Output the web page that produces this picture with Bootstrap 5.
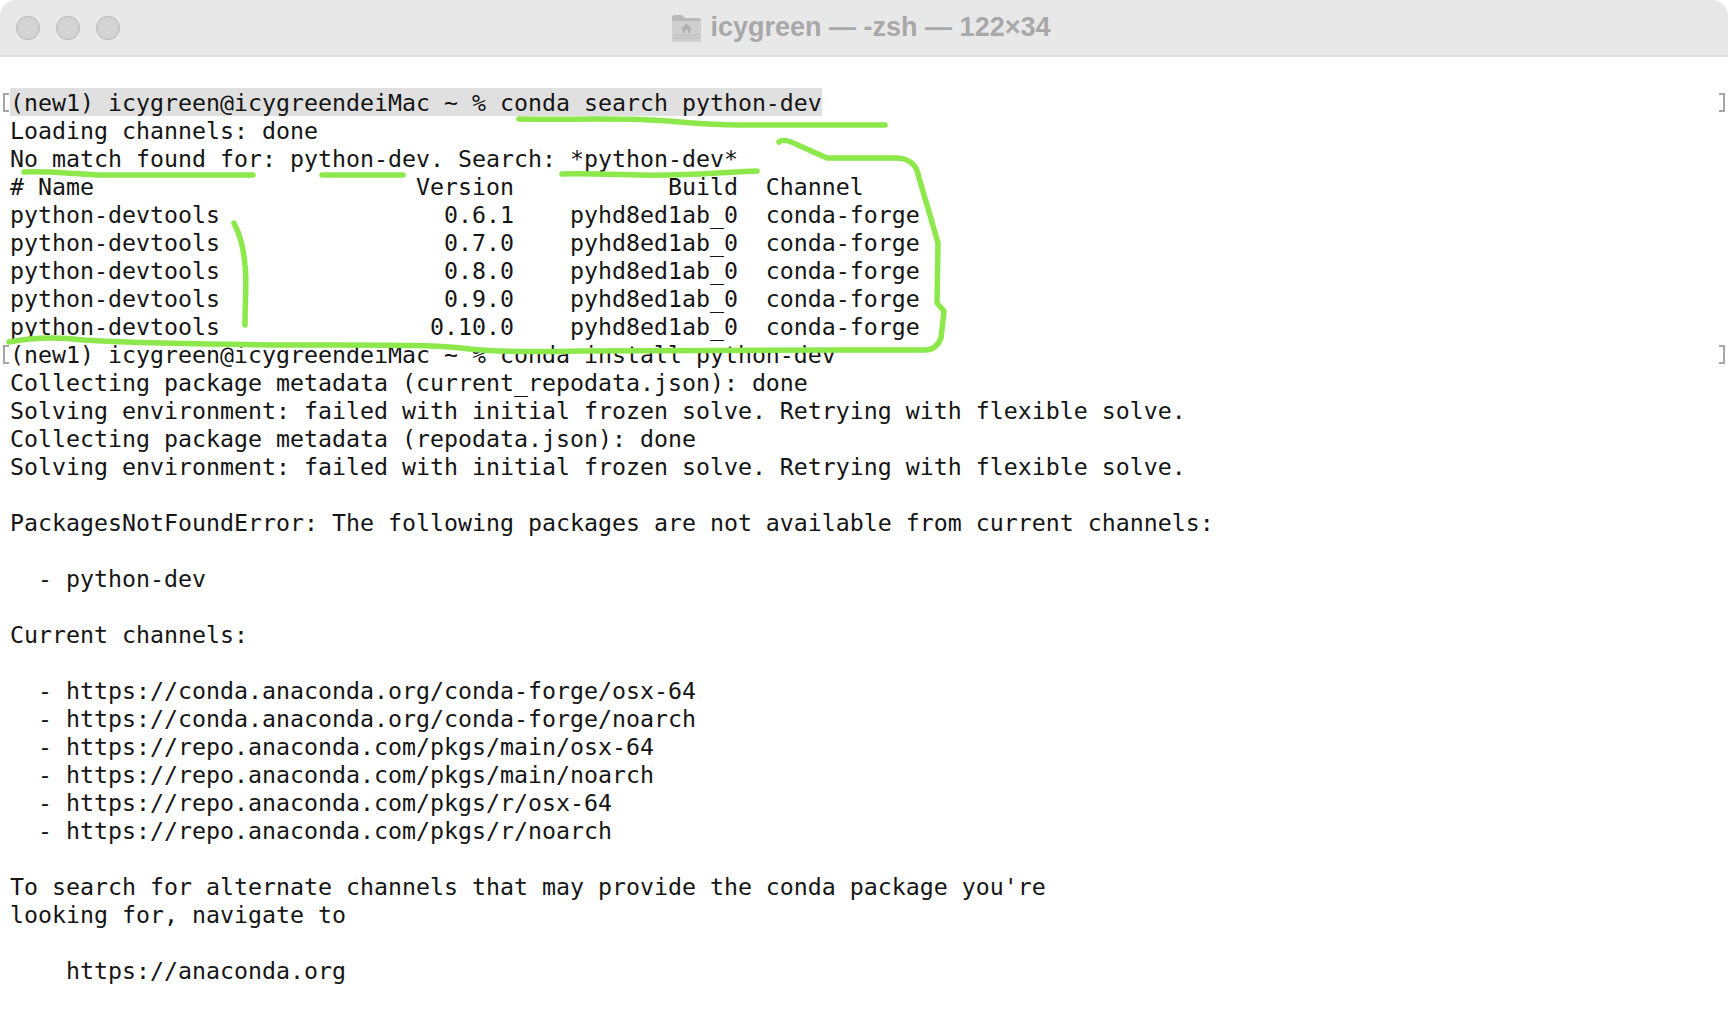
<!DOCTYPE html>
<html lang="en">
<head>
<meta charset="utf-8">
<title>icygreen — -zsh — 122×34</title>
<link href="https://cdn.jsdelivr.net/npm/bootstrap@5.3.0/dist/css/bootstrap.min.css" rel="stylesheet">
<style>
html, body { height: 1022px; overflow: hidden; background: #fff; }
.term-window { height: 1022px; }
.term-titlebar { height: 57px; background: #e8e8e8; border-bottom: 2px solid #dedede; border-radius: 16px 16px 0 0; padding: 0 16px; }
.term-side { flex: 1 1 0; gap: 16px; }
.term-light { width: 24px; height: 24px; border-radius: 50%; background: #d4d4d4; border: 1px solid #b8b8b8; }
.term-title { font-family: "Liberation Sans", Arial, sans-serif; font-weight: 700; font-size: 27px; line-height: 1; color: #a8a8a8; gap: 10px; margin-left: -6px; }
.term-body { padding: 31px 0 0 10px; font-family: "DejaVu Sans Mono", "Liberation Mono", monospace; font-size: 23.25px; color: #151515; }
.term-line { height: 28px; line-height: 30px; white-space: pre; }
.term-mark { background: #e0e0e0; display: inline-block; height: 28px; vertical-align: top; }
.term-prompt::before, .term-prompt::after { content: ""; position: absolute; top: 5px; width: 6px; height: 19px; border: 2px solid #a6a6a6; }
.term-prompt::before { left: -7px; border-right: 0; }
.term-prompt::after { left: 1709px; border-left: 0; }
.term-ink { position: absolute; left: 0; top: 0; width: 1728px; height: 1022px; pointer-events: none; fill: none; stroke: #8de84c; stroke-width: 5.5; stroke-linecap: round; stroke-linejoin: round; }
</style>
</head>
<body>
<div class="term-window position-relative overflow-hidden">
  <div class="term-titlebar d-flex align-items-center">
    <div class="term-side d-flex align-items-center">
      <span class="term-light"></span><span class="term-light"></span><span class="term-light"></span>
    </div>
    <div class="term-title d-flex align-items-center">
      <svg width="29" height="28" viewBox="0 0 29 28" aria-hidden="true">
        <path d="M0 3.5Q0 1 2.5 1H10L13 4H26.5Q29 4 29 6.5V25.5Q29 28 26.5 28H2.5Q0 28 0 25.5Z" fill="#b9b9b9"/>
        <path d="M0 7H29V25.5Q29 28 26.5 28H2.5Q0 28 0 25.5Z" fill="#cfcfcf"/>
        <path d="M1 21H28M1 24H28" stroke="#bdbdbd" stroke-width="1"/>
        <path d="M14.5 9.5L20 14.5H18.5V19H16V16H13V19H10.5V14.5H9Z" fill="#b0b0b0"/>
      </svg>
      <span>icygreen — -zsh — 122×34</span>
    </div>
    <div class="term-side"></div>
  </div>
  <div class="term-body">
<div class="term-line term-prompt position-relative"><span class="term-mark">(new1) icygreen@icygreendeiMac ~ % conda search python-dev</span></div>
<div class="term-line">Loading channels: done</div>
<div class="term-line">No match found for: python-dev. Search: *python-dev*</div>
<div class="term-line"># Name                       Version           Build  Channel</div>
<div class="term-line">python-devtools                0.6.1    pyhd8ed1ab_0  conda-forge</div>
<div class="term-line">python-devtools                0.7.0    pyhd8ed1ab_0  conda-forge</div>
<div class="term-line">python-devtools                0.8.0    pyhd8ed1ab_0  conda-forge</div>
<div class="term-line">python-devtools                0.9.0    pyhd8ed1ab_0  conda-forge</div>
<div class="term-line">python-devtools               0.10.0    pyhd8ed1ab_0  conda-forge</div>
<div class="term-line term-prompt position-relative">(new1) icygreen@icygreendeiMac ~ % conda install python-dev</div>
<div class="term-line">Collecting package metadata (current_repodata.json): done</div>
<div class="term-line">Solving environment: failed with initial frozen solve. Retrying with flexible solve.</div>
<div class="term-line">Collecting package metadata (repodata.json): done</div>
<div class="term-line">Solving environment: failed with initial frozen solve. Retrying with flexible solve.</div>
<div class="term-line"> </div>
<div class="term-line">PackagesNotFoundError: The following packages are not available from current channels:</div>
<div class="term-line"> </div>
<div class="term-line">  - python-dev</div>
<div class="term-line"> </div>
<div class="term-line">Current channels:</div>
<div class="term-line"> </div>
<div class="term-line">  - https://conda.anaconda.org/conda-forge/osx-64</div>
<div class="term-line">  - https://conda.anaconda.org/conda-forge/noarch</div>
<div class="term-line">  - https://repo.anaconda.com/pkgs/main/osx-64</div>
<div class="term-line">  - https://repo.anaconda.com/pkgs/main/noarch</div>
<div class="term-line">  - https://repo.anaconda.com/pkgs/r/osx-64</div>
<div class="term-line">  - https://repo.anaconda.com/pkgs/r/noarch</div>
<div class="term-line"> </div>
<div class="term-line">To search for alternate channels that may provide the conda package you're</div>
<div class="term-line">looking for, navigate to</div>
<div class="term-line"> </div>
<div class="term-line">    https://anaconda.org</div>
  </div>
  <svg class="term-ink" viewBox="0 0 1728 1022" aria-hidden="true">
    <path d="M519 119C560 120 610 118 650 120C680 121 700 125 740 125L885 125"/>
    <path d="M24 172C50 171 70 174 100 175L253 175"/>
    <path d="M322 175H403"/>
    <path d="M562 174C600 173 640 176 665 175C700 175 730 172 757 171"/>
    <path d="M779 142C782 139 790 141 800 146L827 158H895C910 158 917 165 919 178L927 205L938 243L937 303L944 311L941 338C938 346 932 350 925 350H840C760 350 660 351 580 351C540 352 500 352 470 349C440 345 400 345 333 345C240 345 160 344 83 340C60 337 35 337 9 342"/>
    <path d="M234 223C240 235 243 245 245 265C247 280 245 300 245 325"/>
  </svg>
</div>
<script src="https://cdn.jsdelivr.net/npm/bootstrap@5.3.0/dist/js/bootstrap.bundle.min.js"></script>
</body>
</html>
